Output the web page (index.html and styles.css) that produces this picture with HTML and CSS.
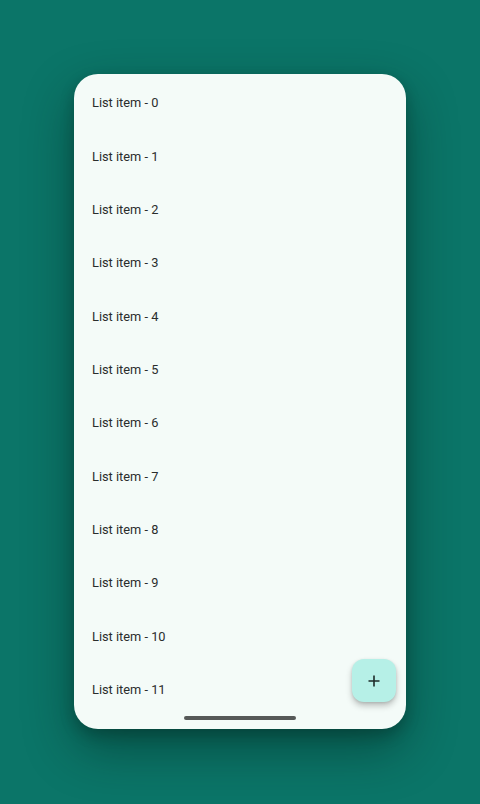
FILE: index.html
```html
<!DOCTYPE html>
<html>
<head>
<meta charset="utf-8">
<link rel="stylesheet" href="styles.css">
</head>
<body>
<div class="stage">
  <div class="phone">
    <ul class="list">
      <li class="item">List item - 0</li>
      <li class="item">List item - 1</li>
      <li class="item">List item - 2</li>
      <li class="item">List item - 3</li>
      <li class="item">List item - 4</li>
      <li class="item">List item - 5</li>
      <li class="item">List item - 6</li>
      <li class="item">List item - 7</li>
      <li class="item">List item - 8</li>
      <li class="item">List item - 9</li>
      <li class="item">List item - 10</li>
      <li class="item">List item - 11</li>
    </ul>
    <button class="fab" aria-label="Add">
      <svg width="12" height="12" viewBox="0 0 12 12"><path d="M6 0.5V11.5M0.5 6H11.5" stroke="#1d2a28" stroke-width="1.6" fill="none"/></svg>
    </button>
    <div class="home-bar"></div>
  </div>
</div>
</body>
</html>
```
FILE: styles.css
```css
html, body {
  margin: 0;
  padding: 0;
  background: #0b7568;
}
body {
  width: 480px;
  height: 804px;
  overflow: hidden;
  font-family: Roboto, "Noto Sans", sans-serif;
}
.stage {
  padding: 74px 74px 0 74px;
}
.phone {
  position: relative;
  width: 332px;
  height: 655px;
  background: #f4fbf8;
  border-radius: 24px;
  box-shadow: 0 20px 50px rgba(0, 30, 25, 0.45), 0 6px 14px rgba(0, 20, 15, 0.25);
  overflow: hidden;
}
.list {
  list-style: none;
  margin: 0;
  padding: 2px 0 0 0;
}
.item {
  height: 53.36px;
  display: flex;
  align-items: center;
  padding-left: 18px;
  font-size: 12.8px;
  color: #2a2d2c;
}
.fab {
  position: absolute;
  left: 278px;
  top: 585px;
  width: 44px;
  height: 43px;
  border: none;
  border-radius: 12px;
  background: #b6f0e7;
  display: flex;
  align-items: center;
  justify-content: center;
  padding: 0;
  box-shadow: 0 4px 6px rgba(0, 0, 0, 0.22), 0 1px 3px rgba(0, 0, 0, 0.12);
}
.home-bar {
  position: absolute;
  left: 110px;
  top: 642px;
  width: 112px;
  height: 4px;
  border-radius: 2px;
  background: #565958;
}
```
